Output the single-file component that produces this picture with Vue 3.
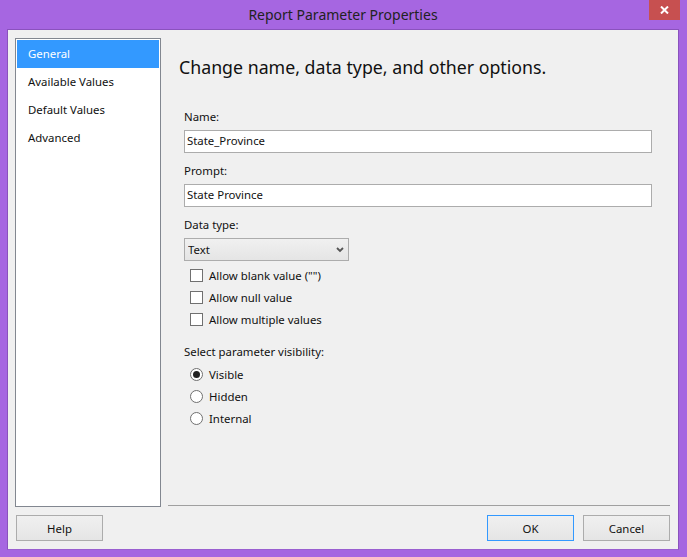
<script setup>
import { ref } from 'vue'

const pages = ['General', 'Available Values', 'Default Values', 'Advanced']
const activePage = ref('General')

const name = ref('State_Province')
const prompt = ref('State Province')
const dataType = ref('Text')

const options = ['Allow blank value ("")', 'Allow null value', 'Allow multiple values']
const visibilities = ['Visible', 'Hidden', 'Internal']
const visibility = ref('Visible')
</script>

<template>
  <div class="window">
    <div class="titlebar">
      <span>Report Parameter Properties</span>
      <button class="close" type="button">
        <svg width="9" height="8" viewBox="0 0 9 8">
          <path d="M1 0.5 L8 7.5 M8 0.5 L1 7.5" stroke="#fff" stroke-width="2" fill="none" />
        </svg>
      </button>
    </div>

    <div class="panel">
      <div class="body">
        <ul class="nav">
          <li
            v-for="page in pages"
            :key="page"
            class="nav-item"
            :class="{ selected: page === activePage }"
            @click="activePage = page"
          >
            {{ page }}
          </li>
        </ul>

        <div class="main">
          <h1 class="heading">Change name, data type, and other options.</h1>

          <div class="form">
            <label class="label">Name:</label>
            <input v-model="name" class="text-input" type="text" />

            <label class="label prompt-label">Prompt:</label>
            <input v-model="prompt" class="text-input" type="text" />

            <label class="label prompt-label">Data type:</label>
            <div class="select-wrap">
              <select v-model="dataType" class="select">
                <option>Text</option>
                <option>Boolean</option>
                <option>Date/Time</option>
                <option>Integer</option>
                <option>Float</option>
              </select>
              <svg class="chevron" width="8" height="6" viewBox="0 0 8 6">
                <path d="M1 1 L4 4 L7 1" stroke="#555" stroke-width="1.8" fill="none" />
              </svg>
            </div>

            <div class="choices">
              <label v-for="opt in options" :key="opt" class="choice">
                <input class="check" type="checkbox" />
                <span>{{ opt }}</span>
              </label>
            </div>

            <div class="label visibility-label">Select parameter visibility:</div>
            <div class="choices radios">
              <label v-for="v in visibilities" :key="v" class="choice">
                <input v-model="visibility" class="radio" type="radio" name="visibility" :value="v" />
                <span>{{ v }}</span>
              </label>
            </div>
          </div>

          <div class="separator"></div>
        </div>
      </div>

      <div class="footer">
        <button class="btn" type="button">Help</button>
        <div class="footer-right">
          <button class="btn default" type="button">OK</button>
          <button class="btn" type="button">Cancel</button>
        </div>
      </div>
    </div>
  </div>
</template>

<style>
html,
body {
  margin: 0;
  background: #a666e1;
}
</style>

<style scoped>
.window {
  position: relative;
  width: 687px;
  height: 557px;
  box-sizing: border-box;
  padding: 0 8px 7px 7px;
  background: #a666e1;
  font-family: "Noto Sans", "Open Sans", sans-serif;
  font-size: 11.4px;
  color: #111;
  display: flex;
  flex-direction: column;
}

.titlebar {
  height: 29px;
  flex: none;
  display: flex;
  align-items: center;
  justify-content: center;
  font-size: 14px;
  color: #222;
}

.close {
  position: absolute;
  top: 0;
  left: 649px;
  width: 31px;
  height: 20px;
  padding: 0;
  border: 0;
  background: #c75050;
  display: flex;
  align-items: center;
  justify-content: center;
}

.panel {
  flex: 1;
  box-sizing: border-box;
  border: 1px solid #8a52bd;
  border-bottom-color: #9a5fd0;
  background: #f0f0f0;
  padding: 8px 8px 8px 7px;
  display: flex;
  flex-direction: column;
}

.body {
  height: 469px;
  flex: none;
  display: flex;
}

.nav {
  width: 146px;
  flex: none;
  box-sizing: border-box;
  margin: 0;
  padding: 1px;
  list-style: none;
  background: #fff;
  border: 1px solid #828790;
}

.nav-item {
  height: 28px;
  line-height: 27px;
  padding-left: 11px;
}

.nav-item.selected {
  background: #3399ff;
  color: #fff;
}

.main {
  flex: 1;
  margin-left: 7px;
  display: flex;
  flex-direction: column;
}

.heading {
  margin: 15px 0 0 11px;
  height: 28px;
  line-height: 28px;
  font-size: 17.75px;
  font-weight: 400;
  color: #111;
}

.form {
  flex: 1;
  padding: 28px 18px 0 16px;
  display: flex;
  flex-direction: column;
}

.label {
  height: 18px;
  line-height: 16px;
  margin-bottom: 3px;
}

.prompt-label {
  margin-top: 10px;
}

.text-input {
  box-sizing: border-box;
  height: 23px;
  width: 100%;
  margin: 0;
  padding: 0 2px 2px;
  border: 1px solid #acacac;
  background: #fff;
  font: inherit;
  color: inherit;
  outline: none;
}

.select-wrap {
  position: relative;
  width: 165px;
  height: 23px;
}

.select {
  appearance: none;
  box-sizing: border-box;
  width: 100%;
  height: 100%;
  margin: 0;
  padding: 0 3px;
  border: 1px solid #acacac;
  border-radius: 0;
  background: linear-gradient(#f0f0f0, #e5e5e5);
  font: inherit;
  color: inherit;
  outline: none;
}

.chevron {
  position: absolute;
  right: 5px;
  top: 9px;
  pointer-events: none;
}

.choices {
  margin-top: 3px;
  padding-left: 6px;
  display: flex;
  flex-direction: column;
}

.radios {
  margin-top: 0;
}

.choice {
  height: 22px;
  display: flex;
  align-items: center;
  gap: 6px;
}

.check,
.radio {
  appearance: none;
  box-sizing: border-box;
  width: 13px;
  height: 13px;
  margin: 0;
  flex: none;
  border: 1px solid #707070;
  background: #fff;
}

.radio {
  border-radius: 50%;
  position: relative;
}

.radio:checked::after {
  content: "";
  position: absolute;
  inset: 2px;
  border-radius: 50%;
  background: #222;
}

.visibility-label {
  margin-top: 14px;
  margin-bottom: 1px;
}

.separator {
  height: 1px;
  margin-bottom: 1px;
  background: #a0a0a0;
}

.footer {
  margin-top: 8px;
  padding-left: 1px;
  display: flex;
  justify-content: space-between;
}

.footer-right {
  display: flex;
  gap: 9px;
}

.btn {
  box-sizing: border-box;
  width: 87px;
  height: 26px;
  margin: 0;
  padding: 0;
  border: 1px solid #acacac;
  background: linear-gradient(#f0f0f0, #e5e5e5);
  font: inherit;
  color: inherit;
}

.btn.default {
  border-color: #3399ff;
}
</style>
